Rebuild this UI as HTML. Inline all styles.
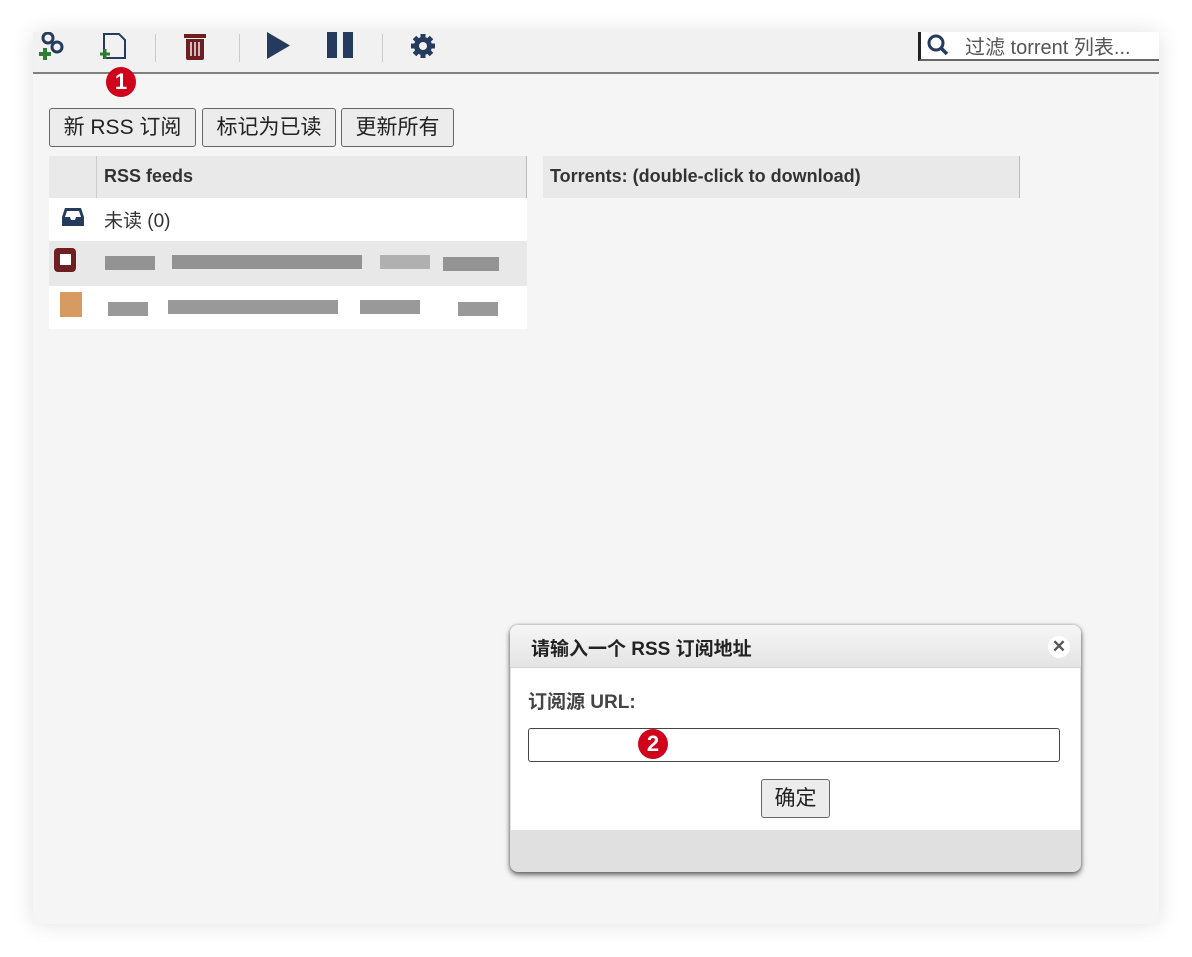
<!DOCTYPE html>
<html><head><meta charset="utf-8"><style>
*{box-sizing:border-box;margin:0;padding:0}
body{width:1192px;height:957px;background:#fff;font-family:"Liberation Sans","Noto Sans CJK SC",sans-serif;position:relative;overflow:hidden}
#panel{position:absolute;left:33px;top:32px;width:1126px;height:892px;background:#f5f5f5;box-shadow:0 0 20px rgba(0,0,0,.12)}
#tb{position:absolute;left:0;top:0;width:1126px;height:42px;background:#f1f1f1;border-bottom:2px solid #808080}
.sep{position:absolute;top:2px;width:1px;height:28px;background:#ccc}
.ab{position:absolute}
.btn{position:absolute;top:108px;height:39px;border:1px solid #666;border-radius:3px;background:#ececec;font-size:21px;color:#222;line-height:37px;text-align:center;white-space:nowrap}
.badge{position:absolute;width:30px;height:30px;border-radius:50%;background:#d0021b;color:#fff;font-weight:bold;font-size:22px;text-align:center;line-height:30px}
.blk{position:absolute;height:14px;background:#777;opacity:.75}
</style></head><body>
<div id="panel">
 <div id="tb">
  <div class="sep" style="left:122px"></div>
  <div class="sep" style="left:206px"></div>
  <div class="sep" style="left:349px"></div>
 </div>
</div>
<svg class="ab" style="left:36px;top:32px" width="34" height="30" viewBox="0 0 34 30"><circle cx="12" cy="6" r="5" fill="none" stroke="#243b5e" stroke-width="3"/><circle cx="21" cy="15" r="5" fill="none" stroke="#243b5e" stroke-width="3"/><path d="M3 22h12M9 16v12" stroke="#2e7d32" stroke-width="4"/></svg>
<svg class="ab" style="left:96px;top:32px" width="32" height="30" viewBox="0 0 32 30"><path d="M8 2v24h21V8l-6-6z" fill="none" stroke="#243b5e" stroke-width="2"/><path d="M4 22h10M9 17v10" stroke="#2e7d32" stroke-width="3"/></svg>
<svg class="ab" style="left:182px;top:32px" width="28" height="29" viewBox="0 0 28 29"><rect x="2" y="2" width="22" height="4" fill="#6d1f22"/><path d="M4 7h18v19a2 2 0 0 1-2 2H6a2 2 0 0 1-2-2z" fill="#6d1f22"/><path d="M9 10v14M13 10v14M17 10v14" stroke="#fff" stroke-width="1.4"/></svg>
<svg class="ab" style="left:266px;top:32px" width="26" height="27"><path d="M1 0L24 13.5 1 27z" fill="#243b5e"/></svg>
<svg class="ab" style="left:327px;top:32px" width="28" height="27"><rect x="0" y="0" width="10" height="26" fill="#243b5e"/><rect x="16" y="0" width="10" height="26" fill="#243b5e"/></svg>
<svg class="ab" style="left:409px;top:32px" width="28" height="28" viewBox="0 0 28 28"><g fill="#243b5e"><circle cx="14" cy="14" r="9"/><g stroke="#243b5e" stroke-width="5"><path d="M14 2v24M2 14h24M5.5 5.5l17 17M22.5 5.5l-17 17"/></g></g><circle cx="14" cy="14" r="4" fill="#f1f1f1"/></svg>
<div class="ab" style="left:918px;top:32px;width:241px;height:29px;background:#fff;border-left:3px solid #222;border-bottom:2px solid #666"></div>
<svg class="ab" style="left:926px;top:33px" width="26" height="24"><circle cx="10" cy="10" r="7" fill="none" stroke="#243b5e" stroke-width="3"/><path d="M15 15l6 6" stroke="#243b5e" stroke-width="3.5"/></svg>
<div class="ab" style="left:965px;top:31px;font-size:20px;color:#555">过滤 torrent 列表...</div>
<div class="badge" style="left:106px;top:67px">1</div>
<div class="btn" style="left:49px;width:147px">新 RSS 订阅</div>
<div class="btn" style="left:202px;width:134px">标记为已读</div>
<div class="btn" style="left:341px;width:113px">更新所有</div>
<div class="ab" style="left:49px;top:156px;width:478px;height:42px;background:#e9e9e9;border-right:1px solid #bbb"></div>
<div class="ab" style="left:96px;top:156px;width:1px;height:42px;background:#ccc"></div>
<div class="ab" style="left:104px;top:166px;font-size:18px;font-weight:bold;color:#333">RSS feeds</div>
<div class="ab" style="left:543px;top:156px;width:477px;height:42px;background:#e9e9e9;border-right:1px solid #bbb"></div>
<div class="ab" style="left:550px;top:166px;font-size:18px;font-weight:bold;color:#333">Torrents: (double-click to download)</div>
<div class="ab" style="left:49px;top:198px;width:478px;height:43px;background:#fff"></div>
<div class="ab" style="left:49px;top:241px;width:478px;height:45px;background:#e8e8e8"></div>
<div class="ab" style="left:49px;top:286px;width:478px;height:43px;background:#fff"></div>
<svg class="ab" style="left:61px;top:207px" width="24" height="20"><path d="M4 1h16l3 9v9H1v-9z" fill="#243b5e"/><path d="M4 10h5l1 3h4l1-3h5L18 4H6z" fill="#fff"/></svg>
<div class="ab" style="left:104px;top:206px;font-size:19px;color:#333">未读 (0)</div>
<div class="ab" style="left:54px;top:248px;width:22px;height:24px;background:#6d1f22;border-radius:4px"></div>
<div class="ab" style="left:60px;top:254px;width:11px;height:11px;background:#fff"></div>
<div class="ab" style="left:60px;top:292px;width:22px;height:25px;background:#d08a45;opacity:.85"></div>
<div class="blk" style="left:105px;top:256px;width:50px"></div>
<div class="blk" style="left:172px;top:255px;width:190px"></div>
<div class="blk" style="left:380px;top:255px;width:50px;opacity:.5"></div>
<div class="blk" style="left:443px;top:257px;width:56px"></div>
<div class="blk" style="left:108px;top:302px;width:40px"></div>
<div class="blk" style="left:168px;top:300px;width:170px"></div>
<div class="blk" style="left:360px;top:300px;width:60px"></div>
<div class="blk" style="left:458px;top:302px;width:40px"></div>
<div class="ab" style="left:510px;top:625px;width:571px;height:247px;border-radius:8px;background:#e0e0e0;box-shadow:0 3px 6px rgba(0,0,0,.55),0 0 3px rgba(0,0,0,.3);overflow:hidden">
 <div style="height:43px;background:linear-gradient(#f6f6f6,#e4e4e4);border-bottom:1px solid #d4d4d4"></div>
 <div style="position:absolute;top:43px;left:1px;right:1px;height:162px;background:#fff"></div>
</div>
<div class="ab" style="left:531px;top:634px;font-size:19px;font-weight:bold;color:#222">请输入一个 RSS 订阅地址</div>
<div class="ab" style="left:1048px;top:636px;width:22px;height:22px;border-radius:50%;background:#fff;color:#555;font-size:17px;font-weight:bold;text-align:center;line-height:22px">✕</div>
<div class="ab" style="left:528px;top:687px;font-size:19px;font-weight:bold;color:#444">订阅源 URL:</div>
<div class="ab" style="left:528px;top:728px;width:532px;height:34px;border:1px solid #444;border-radius:3px;background:#fff"></div>
<div class="badge" style="left:638px;top:729px">2</div>
<div class="ab" style="left:761px;top:779px;width:69px;height:39px;border:1px solid #666;border-radius:3px;background:#ececec;font-size:21px;line-height:37px;text-align:center;color:#222">确定</div>
</body></html>
